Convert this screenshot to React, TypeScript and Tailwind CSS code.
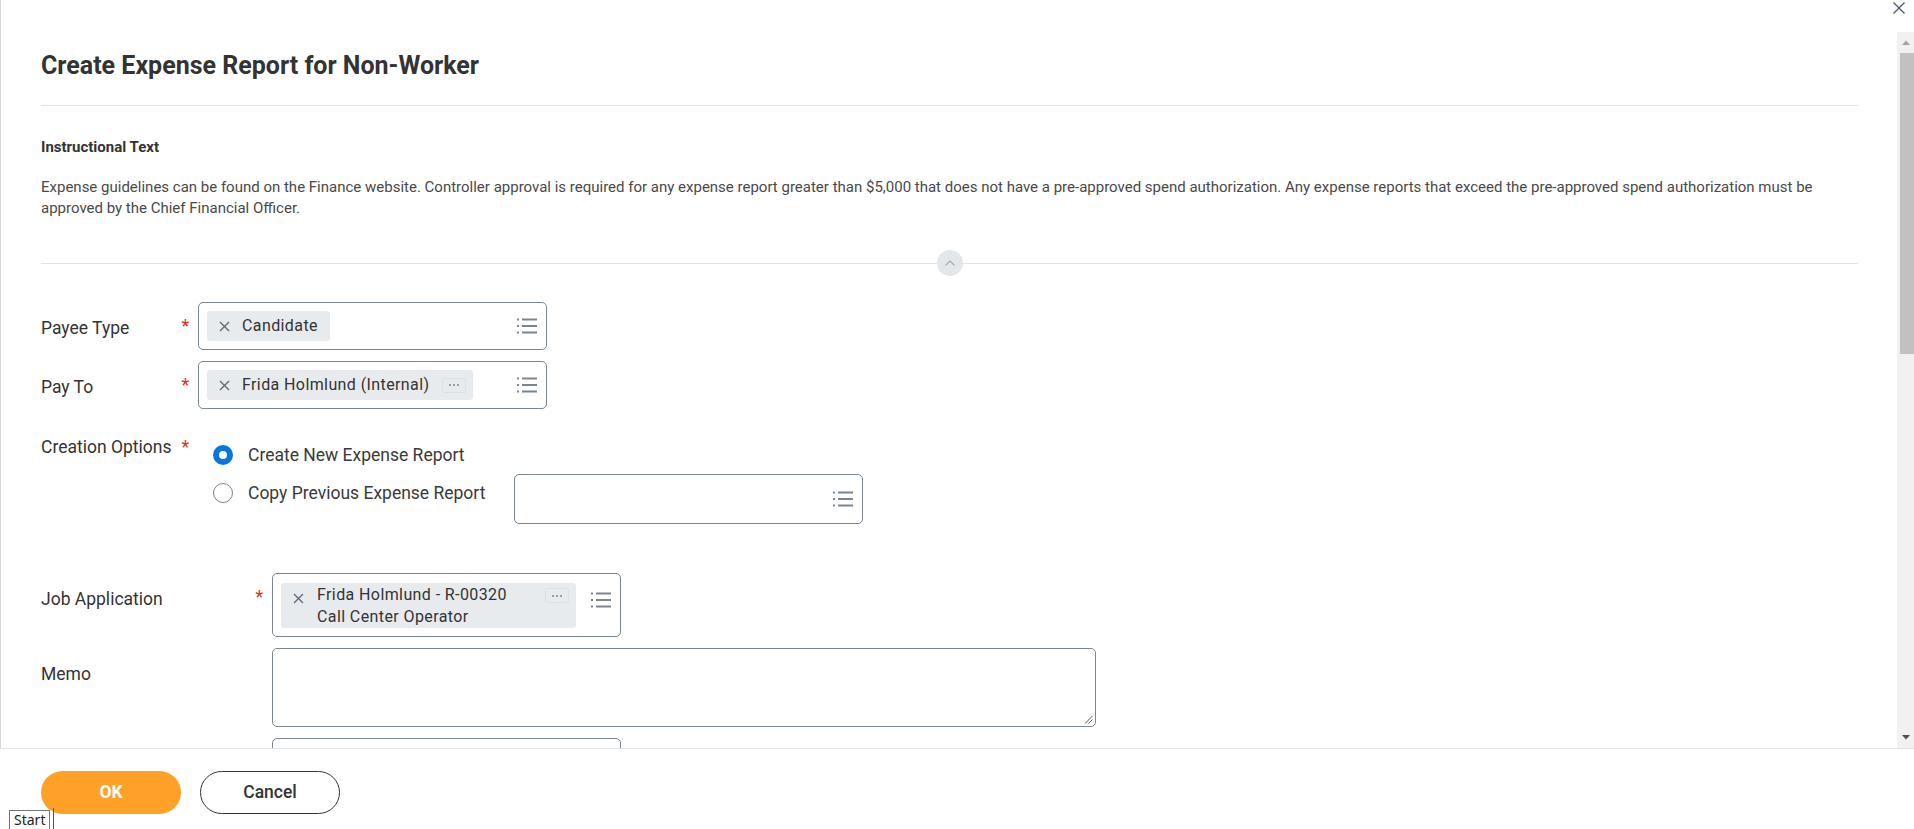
import React from "react";

function ListIcon() {
  return (
    <svg width="20" height="16" viewBox="0 0 20 16" className="shrink-0">
      <rect x="0" y="0.5" width="2" height="2" fill="#7b858f" />
      <rect x="0" y="7" width="2" height="2" fill="#7b858f" />
      <rect x="0" y="13.5" width="2" height="2" fill="#7b858f" />
      <rect x="5" y="0.5" width="15" height="2" fill="#7b858f" />
      <rect x="5" y="7" width="15" height="2" fill="#7b858f" />
      <rect x="5" y="13.5" width="15" height="2" fill="#7b858f" />
    </svg>
  );
}

function RemoveIcon() {
  return (
    <svg width="11" height="11" viewBox="0 0 11 11" className="shrink-0">
      <path d="M1 1L10 10M10 1L1 10" stroke="#5e6a75" strokeWidth="1.4" />
    </svg>
  );
}

function MoreBox() {
  return (
    <span className="flex h-[15px] w-[24px] shrink-0 items-center justify-center gap-[2px] rounded-[2px] border border-[#dde1e5]">
      <span className="h-[2px] w-[2px] rounded-full bg-[#7b858f]" />
      <span className="h-[2px] w-[2px] rounded-full bg-[#7b858f]" />
      <span className="h-[2px] w-[2px] rounded-full bg-[#7b858f]" />
    </span>
  );
}

function Required() {
  return <span className="w-[9px] shrink-0 pt-[12px] text-center text-[18px] leading-[24px] text-[#de2e21]">*</span>;
}

function FieldLabel({ children, width }: { children: React.ReactNode; width: string }) {
  return <div className={`${width} shrink-0 pt-[14px] text-[17.5px] leading-[24px] text-[#333333]`}>{children}</div>;
}

export default function App() {
  return (
    <div className="relative flex h-[829px] w-[1914px] flex-col overflow-hidden bg-white font-['Roboto',sans-serif] text-[#333333]">
      {/* close */}
      <button className="absolute right-[9px] top-[2px]">
        <svg width="12" height="12" viewBox="0 0 12 12">
          <path d="M0.5 0.5L11.5 11.5M11.5 0.5L0.5 11.5" stroke="#4a5866" strokeWidth="1.3" />
        </svg>
      </button>

      <div className="flex min-h-0 flex-1">
        <main className="min-w-0 flex-1 overflow-hidden border-l border-[#d6d6d6] pl-[40px] pr-[39px] pt-[51px]">
          <h1 className="text-[25px] font-bold leading-[30px] text-[#333333]">Create Expense Report for Non-Worker</h1>
          <div className="mt-[24px] h-px bg-[#e2e4e7]" />

          <div className="mt-[31px] text-[15px] font-bold leading-[20px]">Instructional Text</div>
          <p className="mt-[20px] text-[15px] leading-[21px] text-[#494949]">
            Expense guidelines can be found on the Finance website. Controller approval is required for any expense report greater than $5,000 that does not have a
            pre-approved spend authorization. Any expense reports that exceed the pre-approved spend authorization must be approved by the Chief Financial Officer.
          </p>

          <div className="mt-[31px] flex h-[26px] items-center">
            <div className="h-px flex-1 bg-[#e2e4e7]" />
            <button className="flex h-[26px] w-[26px] items-center justify-center rounded-full bg-[#e4e7ea]">
              <svg width="10" height="6" viewBox="0 0 10 6">
                <path d="M0.5 5.5L5 1L9.5 5.5" fill="none" stroke="#a2aab2" strokeWidth="1.1" />
              </svg>
            </button>
            <div className="h-px flex-1 bg-[#e2e4e7]" />
          </div>

          {/* Payee Type */}
          <div className="mt-[26px] flex items-start">
            <FieldLabel width="w-[140px]">Payee Type</FieldLabel>
            <Required />
            <div className="ml-[8px] flex h-[48px] w-[349px] items-center justify-between rounded-[5px] border border-[#7b858f] pl-[8px] pr-[9px]">
              <span className="flex h-[30px] items-center rounded-[3px] bg-[#e8ebed] pl-[12px] pr-[12px]">
                <RemoveIcon />
                <span className="ml-[12px] text-[16px] leading-[20px] tracking-[0.4px]">Candidate</span>
              </span>
              <ListIcon />
            </div>
          </div>

          {/* Pay To */}
          <div className="mt-[11px] flex items-start">
            <FieldLabel width="w-[140px]">Pay To</FieldLabel>
            <Required />
            <div className="ml-[8px] flex h-[48px] w-[349px] items-center justify-between rounded-[5px] border border-[#7b858f] pl-[8px] pr-[9px]">
              <span className="flex h-[30px] items-center rounded-[3px] bg-[#e8ebed] pl-[12px] pr-[7px]">
                <RemoveIcon />
                <span className="ml-[12px] text-[16px] leading-[20px] tracking-[0.4px]">Frida Holmlund (Internal)</span>
                <span className="ml-[13px]">
                  <MoreBox />
                </span>
              </span>
              <ListIcon />
            </div>
          </div>

          {/* Creation Options */}
          <div className="mt-[26px] flex items-start">
            <div className="w-[140px] shrink-0 text-[17.5px] leading-[24px]">Creation Options</div>
            <span className="w-[9px] shrink-0 text-center text-[18px] leading-[24px] text-[#de2e21]">*</span>
            <div className="ml-[8px] flex flex-col pt-[8px]">
              <div className="flex h-[24px] items-center pl-[15px]">
                <span className="h-[20px] w-[20px] shrink-0 rounded-full border-[6px] border-[#0875e1] bg-white" />
                <span className="ml-[15px] text-[17.5px] leading-[24px] text-[#3a3a3a]">Create New Expense Report</span>
              </div>
              <div className="mt-[7px] flex items-start">
                <div className="mt-[7px] flex h-[24px] w-[316px] items-center pl-[15px]">
                  <span className="h-[20px] w-[20px] shrink-0 rounded-full border-[1.5px] border-[#7b858f] bg-white" />
                  <span className="ml-[15px] text-[17.5px] leading-[24px] text-[#3a3a3a]">Copy Previous Expense Report</span>
                </div>
                <div className="flex h-[50px] w-[349px] items-center justify-end rounded-[5px] border border-[#7b858f] pr-[9px]">
                  <ListIcon />
                </div>
              </div>
            </div>
          </div>

          {/* Job Application */}
          <div className="mt-[49px] flex items-start">
            <FieldLabel width="w-[214px]">Job Application</FieldLabel>
            <Required />
            <div className="ml-[8px] flex h-[64px] w-[349px] items-start justify-between rounded-[5px] border border-[#7b858f] pl-[8px] pr-[9px] pt-[9px]">
              <span className="flex h-[45px] w-[295px] items-start rounded-[3px] bg-[#e8ebed] pl-[12px] pr-[7px]">
                <span className="mt-[10px]">
                  <RemoveIcon />
                </span>
                <span className="ml-[13px] flex-1 pt-[0.5px] text-[16px] leading-[22px] tracking-[0.4px]">
                  Frida Holmlund - R-00320
                  <br />
                  Call Center Operator
                </span>
                <span className="mt-[5px]">
                  <MoreBox />
                </span>
              </span>
              <span className="mt-[9px]">
                <ListIcon />
              </span>
            </div>
          </div>

          {/* Memo */}
          <div className="mt-[11px] flex items-start">
            <FieldLabel width="w-[214px]">Memo</FieldLabel>
            <span className="w-[9px] shrink-0" />
            <div className="relative ml-[8px] h-[79px] w-[824px] rounded-[5px] border border-[#7b858f]">
              <svg width="9" height="9" viewBox="0 0 9 9" className="absolute bottom-[2px] right-[2px]">
                <path d="M8.5 1L1 8.5M8.5 4.5L4.5 8.5" stroke="#555" strokeWidth="1" />
              </svg>
            </div>
          </div>

          <div className="mt-[11px] flex">
            <div className="w-[231px] shrink-0" />
            <div className="h-[48px] w-[349px] rounded-[5px] border border-[#7b858f]" />
          </div>
        </main>

        {/* scrollbar */}
        <div className="mt-[32px] flex w-[17px] shrink-0 flex-col bg-[#f1f1f1]">
          <div className="flex h-[21px] items-center justify-center">
            <svg width="8" height="5" viewBox="0 0 8 5">
              <path d="M0 5L4 0.5L8 5Z" fill="#a3a3a3" />
            </svg>
          </div>
          <div className="ml-[3px] h-[301px] bg-[#c1c1c1]" />
          <div className="flex-1" />
          <div className="flex h-[21px] items-center justify-center">
            <svg width="8" height="5" viewBox="0 0 8 5">
              <path d="M0 0L4 4.5L8 0Z" fill="#505050" />
            </svg>
          </div>
        </div>
      </div>

      <footer className="flex h-[81px] shrink-0 items-start gap-[19px] border-t border-[#e2e4e7] pl-[41px] pt-[22px]">
        <button className="h-[43px] w-[140px] rounded-full bg-[#ffa126] text-[17.5px] font-bold text-white">OK</button>
        <button className="h-[43px] w-[140px] rounded-full border border-[#333333] bg-white text-[17.5px] font-medium text-[#333333]">Cancel</button>
      </footer>

      {/* tooltip overlay */}
      <div className="absolute left-[9px] top-[810px] h-[22px] border border-[#767676] bg-white px-[4px] font-['Noto_Sans',sans-serif] text-[14px] leading-[18px] text-[#222222]">
        Start
      </div>
      <div className="absolute left-[53px] top-[808px] h-[21px] w-px bg-[#555555]" />
    </div>
  );
}
